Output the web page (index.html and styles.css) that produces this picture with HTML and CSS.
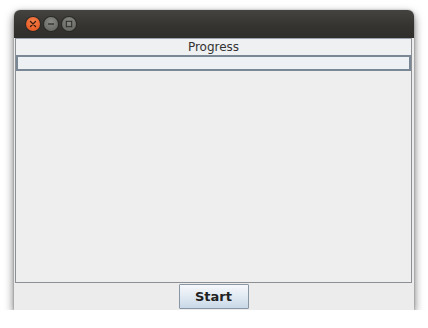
FILE: index.html
```html
<!DOCTYPE html>
<html>
<head>
<meta charset="utf-8">
<link rel="stylesheet" href="styles.css">
</head>
<body>
<div class="window">
  <div class="titlebar">
    <span class="wbtn close"><svg viewBox="0 0 14 14" width="14" height="14"><path d="M4.5 4.5 L9.5 9.5 M9.5 4.5 L4.5 9.5" stroke="#3a1a0a" stroke-width="1.3" stroke-linecap="round"/></svg></span>
    <span class="wbtn"><svg viewBox="0 0 14 14" width="14" height="14"><path d="M4 7 H10" stroke="#2e2e2b" stroke-width="1.3"/></svg></span>
    <span class="wbtn"><svg viewBox="0 0 14 14" width="14" height="14"><rect x="4.3" y="4.3" width="5.4" height="5.4" fill="none" stroke="#2e2e2b" stroke-width="1.1"/></svg></span>
  </div>
  <div class="content">
    <div class="main">
      <div class="label">Progress</div>
      <div class="bar"></div>
    </div>
    <div class="footer">
      <button class="start">Start</button>
    </div>
  </div>
</div>
</body>
</html>
```

FILE: styles.css
```css
html, body {
  margin: 0;
  padding: 0;
  background: #ffffff;
}
body {
  padding: 10px 0 0 14px;
  font-family: "DejaVu Sans", "Liberation Sans", sans-serif;
}
.window {
  width: 400px;
  height: 300px;
  display: flex;
  flex-direction: column;
  border-radius: 6px 6px 0 0;
  box-shadow: 0 4px 10px rgba(0,0,0,0.6), 0 0 2px rgba(0,0,0,0.3);
}
.titlebar {
  height: 28px;
  flex: none;
  background: linear-gradient(#44433f, #34332f 60%, #2f2e2a);
  border-radius: 6px 6px 0 0;
  display: flex;
  align-items: center;
  padding-left: 12px;
  gap: 4px;
}
.wbtn {
  width: 14px;
  height: 14px;
  border-radius: 50%;
  background: radial-gradient(circle at 50% 35%, #8a8a86, #5e5e5a);
  box-shadow: 0 0 0 1px #2a2a27;
  display: block;
}
.wbtn svg { display: block; }
.wbtn.close {
  background: radial-gradient(circle at 50% 35%, #f5824d, #df4d17);
}
.content {
  flex: 1;
  display: flex;
  flex-direction: column;
  background: #ececec;
  padding: 0 2px 0 1px;
}
.main {
  flex: 1;
  border: 1px solid #8c8f94;
  border-top: 1px solid #9aa3ad;
  background: #eeeeee;
  display: flex;
  flex-direction: column;
}
.label {
  height: 16px;
  line-height: 17px;
  text-align: center;
  font-size: 12px;
  color: #333333;
  background: #eef0f2;
}
.bar {
  height: 12px;
  border: 2px solid #7a8896;
  background: #eef1f4;
}
.footer {
  height: 27px;
  flex: none;
  display: flex;
  justify-content: center;
  padding-top: 1px;
  box-sizing: border-box;
}
.start {
  width: 70px;
  height: 25px;
  border: 1px solid #8996a3;
  border-radius: 1px;
  background: linear-gradient(#f6f8fb, #e3ebf3 45%, #c9d8e8);
  font-family: "DejaVu Sans", sans-serif;
  font-weight: bold;
  font-size: 13px;
  color: #222;
  padding: 0;
  margin: 0;
}
```
